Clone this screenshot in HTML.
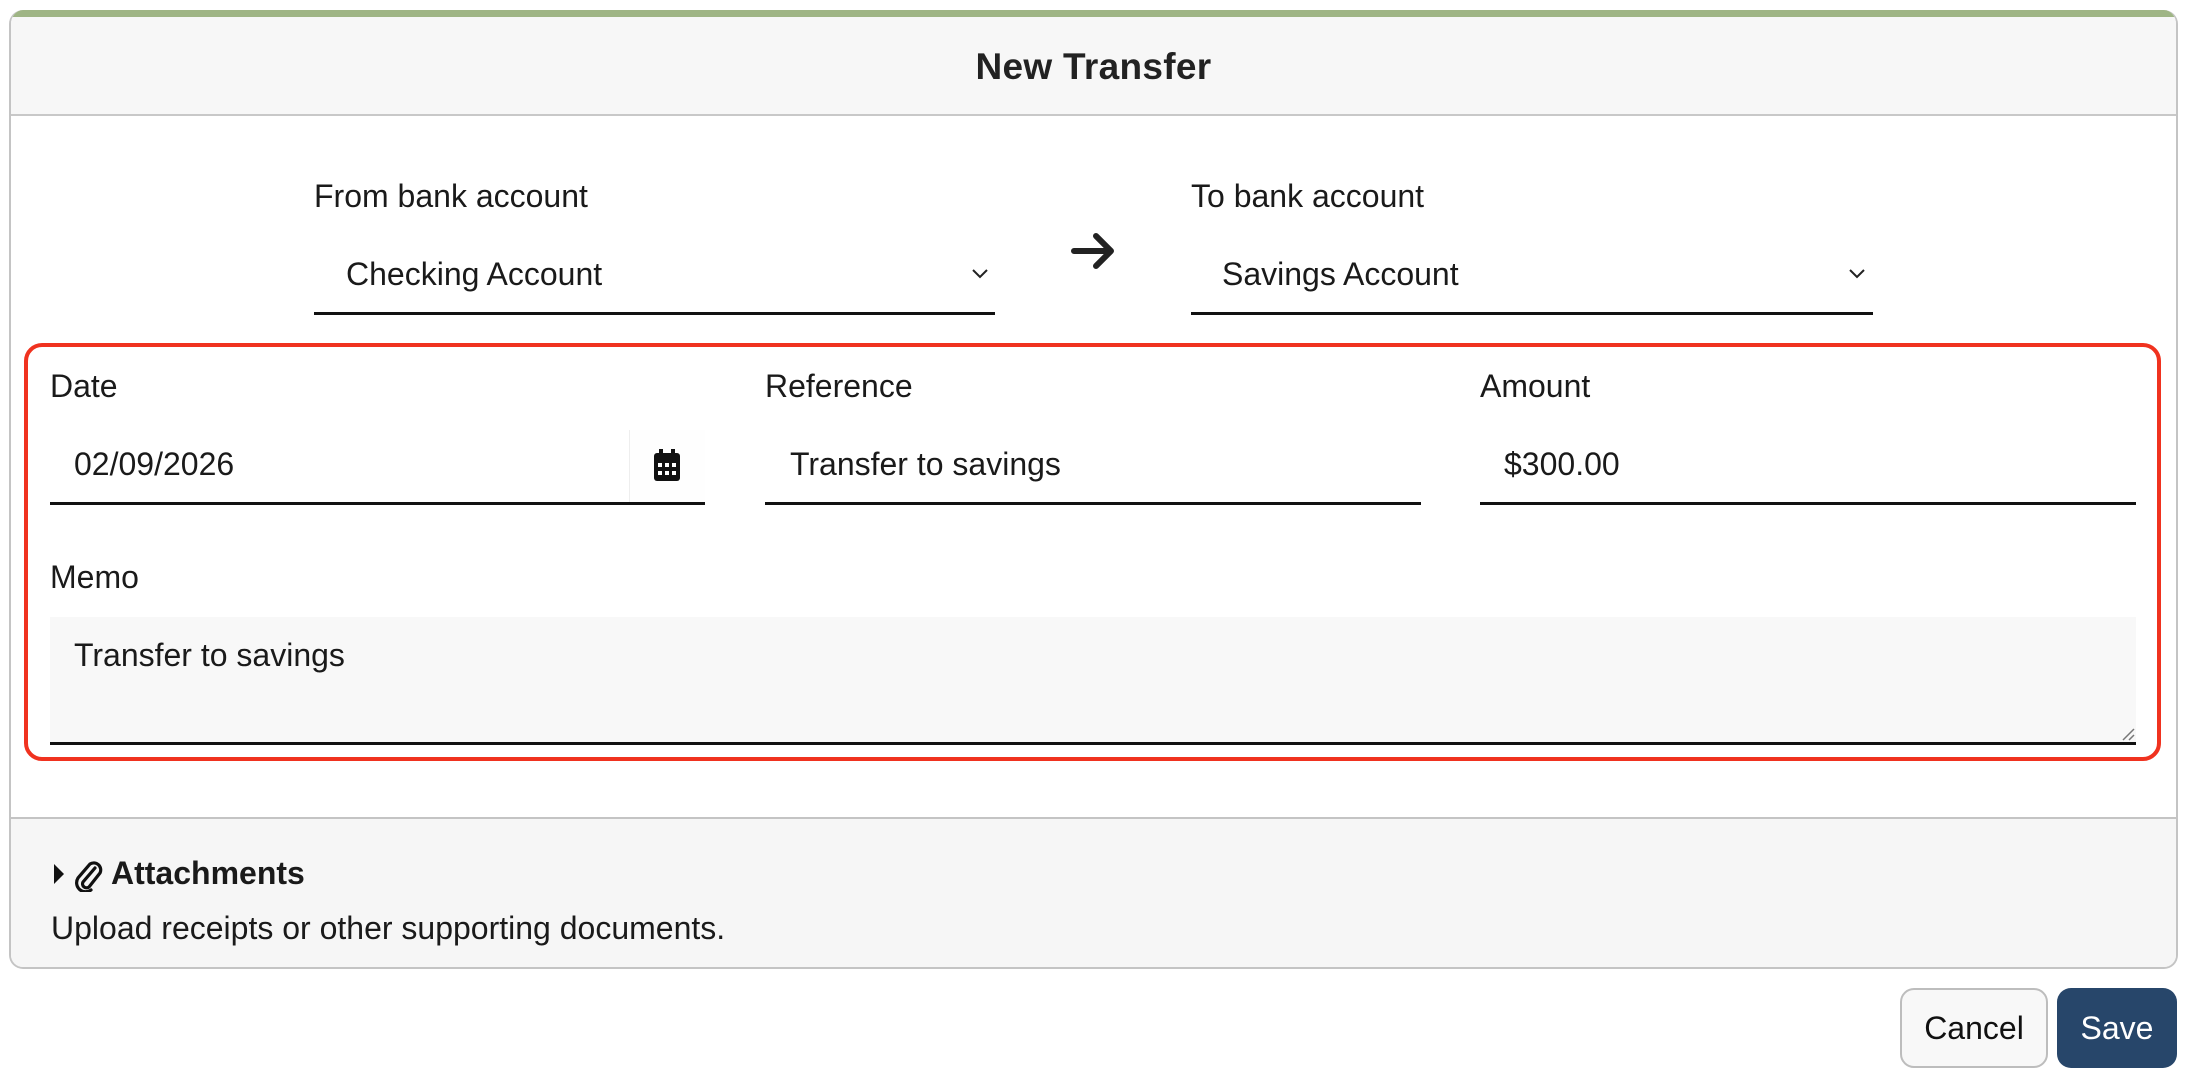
<!DOCTYPE html>
<html><head><style>
*{box-sizing:border-box;margin:0;padding:0}
body{width:2188px;height:1092px;background:#fff;font-family:"Liberation Sans",sans-serif;color:#1a1a1a;position:relative;overflow:hidden;font-size:32px;letter-spacing:0}
.abs{position:absolute}
.card{left:9px;top:10px;width:2169px;height:959px;border:2px solid #c4c4c4;border-top:none;border-radius:14px;overflow:hidden;background:#fff}
.green{left:0;top:0;width:100%;height:7px;background:#9fb585}
.hdr{left:0;top:7px;width:100%;height:99px;background:#f7f7f7;border-bottom:2px solid #c8c8c8}
.title{left:0;width:100%;top:29px;text-align:center;font-size:37px;font-weight:bold;color:#222;letter-spacing:0.3px}
.foot{left:0;top:807px;width:100%;height:152px;background:#f6f6f6;border-top:2px solid #c4c4c4}
.ul{height:3px;background:#111}
.red{left:24px;top:343px;width:2137px;height:418px;border:4px solid #f0321f;border-radius:18px}
.btn{border-radius:14px;font-size:32px;text-align:center;line-height:76px}
</style></head><body>
<div class="abs card">
 <div class="abs green"></div>
 <div class="abs hdr"><div class="abs title">New Transfer</div></div>
 <div class="abs foot">
  <svg class="abs" style="left:41px;top:43px" width="14" height="24" viewBox="0 0 14 24"><path d="M2 2 L12 12 L2 22Z" fill="#111"/></svg>
  <svg class="abs" style="left:62px;top:39px" width="32" height="34" viewBox="0 0 32 34"><path d="M22 10 L10 24 a4 4 0 0 0 6 5 L27 15 a7 7 0 0 0 -10 -9 L5 20 a9 9 0 0 0 13 12" fill="none" stroke="#111" stroke-width="3.2" stroke-linecap="round"/></svg>
  <div class="abs" style="left:100px;top:36px;font-weight:bold;font-size:32px">Attachments</div>
  <div class="abs" style="left:40px;top:91px">Upload receipts or other supporting documents.</div>
 </div>
</div>
<div class="abs" style="left:314px;top:178px">From bank account</div>
<div class="abs" style="left:346px;top:256px">Checking Account</div>
<svg class="abs" style="left:971px;top:268px" width="18" height="12" viewBox="0 0 18 12"><path d="M2 2 L9 9 L16 2" fill="none" stroke="#222" stroke-width="2"/></svg>
<div class="abs ul" style="left:314px;top:312px;width:681px"></div>
<svg class="abs" style="left:1070px;top:231px" width="46" height="40" viewBox="0 0 46 40"><path d="M4 20 H40 M26 5 L41 20 L26 35" fill="none" stroke="#222" stroke-width="6" stroke-linecap="round" stroke-linejoin="round"/></svg>
<div class="abs" style="left:1191px;top:178px">To bank account</div>
<div class="abs" style="left:1222px;top:256px">Savings Account</div>
<svg class="abs" style="left:1848px;top:268px" width="18" height="12" viewBox="0 0 18 12"><path d="M2 2 L9 9 L16 2" fill="none" stroke="#222" stroke-width="2"/></svg>
<div class="abs ul" style="left:1191px;top:312px;width:682px"></div>
<div class="abs red"></div>
<div class="abs" style="left:50px;top:368px">Date</div>
<div class="abs" style="left:74px;top:446px">02/09/2026</div>
<div class="abs" style="left:629px;top:430px;width:76px;height:72px;border-left:1px solid #eee;background:#fefefe"></div>
<svg class="abs" style="left:653px;top:448px" width="28" height="34" viewBox="0 0 28 34"><rect x="6" y="1" width="4" height="7" fill="#111"/><rect x="18" y="1" width="4" height="7" fill="#111"/><rect x="1" y="5" width="26" height="28" rx="3" fill="#111"/><g fill="#fff"><rect x="5" y="15" width="4" height="4"/><rect x="12" y="15" width="4" height="4"/><rect x="19" y="15" width="4" height="4"/><rect x="5" y="23" width="4" height="4"/><rect x="12" y="23" width="4" height="4"/><rect x="19" y="23" width="4" height="4"/></g></svg>
<div class="abs ul" style="left:50px;top:502px;width:655px"></div>
<div class="abs" style="left:765px;top:368px">Reference</div>
<div class="abs" style="left:790px;top:446px">Transfer to savings</div>
<div class="abs ul" style="left:765px;top:502px;width:656px"></div>
<div class="abs" style="left:1480px;top:368px">Amount</div>
<div class="abs" style="left:1504px;top:446px">$300.00</div>
<div class="abs ul" style="left:1480px;top:502px;width:656px"></div>
<div class="abs" style="left:50px;top:559px">Memo</div>
<div class="abs" style="left:50px;top:617px;width:2086px;height:128px;background:#f8f8f8;border-bottom:3px solid #111"></div>
<div class="abs" style="left:74px;top:637px">Transfer to savings</div>
<svg class="abs" style="left:2122px;top:726px" width="14" height="16" viewBox="0 0 14 16"><path d="M1 14 L12 3 M7 14 L12 9" stroke="#777" stroke-width="1.5"/></svg>
<div class="abs btn" style="left:1900px;top:988px;width:148px;height:80px;border:2px solid #bdbdbd;background:#f8f8f8;color:#111">Cancel</div>
<div class="abs btn" style="left:2057px;top:988px;width:120px;height:80px;background:#27466a;color:#fff;line-height:80px">Save</div>
</body></html>
